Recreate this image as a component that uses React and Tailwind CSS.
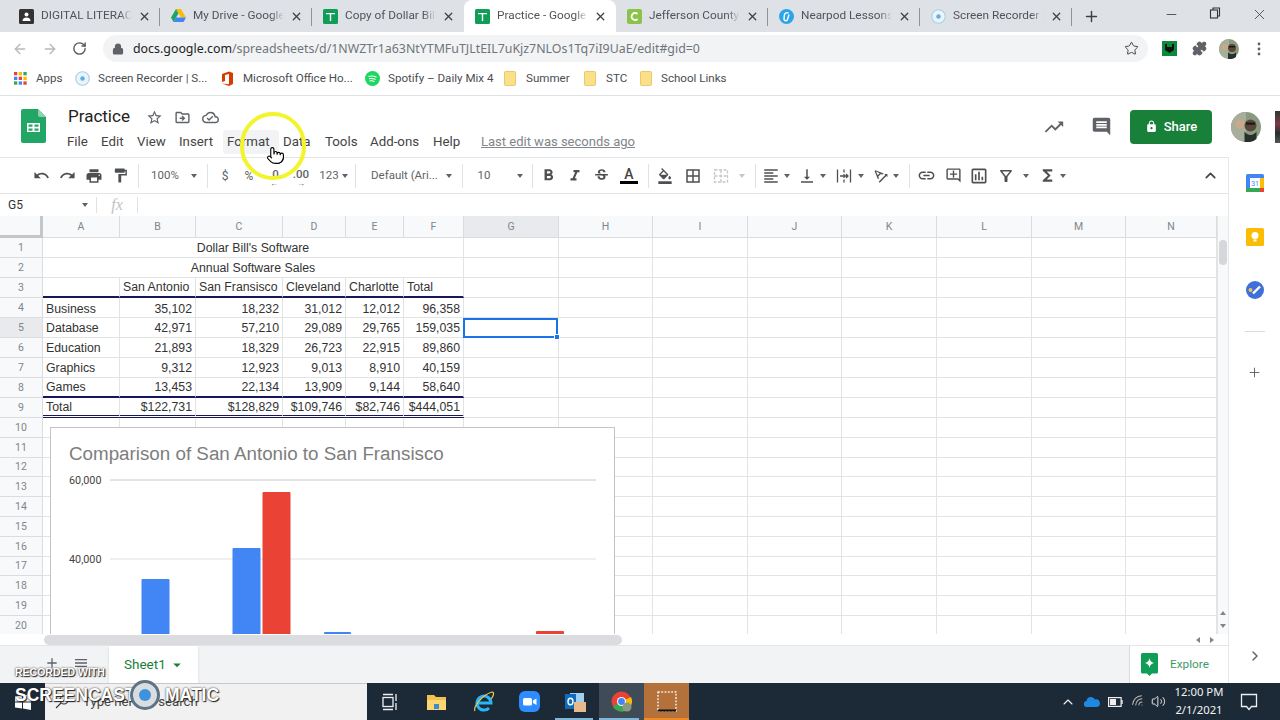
import React from "react";
import { ArrowLeft, ArrowRight, RotateCw, Lock, Star, Puzzle, Pointer, X, Plus, Minus, ChevronRight, ChevronUp, Wifi, Volume2 } from "lucide-react";
import {
  MdUndo, MdRedo, MdPrint, MdFormatPaint, MdFormatBold, MdFormatItalic, MdStrikethroughS, MdFormatColorFill, MdBorderAll,
  MdFormatAlignLeft, MdVerticalAlignBottom, MdTextRotationAngleup, MdLink, MdOutlineAddComment, MdOutlineInsertChart, MdOutlineFilterAlt,
  MdFunctions, MdStarBorder, MdOutlineDriveFileMove, MdOutlineCloudDone, MdTrendingUp, MdComment, MdLock, MdArrowDropDown, MdMenu, MdAdd,
} from "react-icons/md";

const ui = "font-['Noto_Sans',sans-serif]";
const rb = "font-['Roboto',sans-serif]";

const SheetIcon = () => (
  <svg width="15" height="15" viewBox="0 0 15 15" className="shrink-0"><rect width="15" height="15" rx="1.5" fill="#0f9d58" /><path d="M3 4h9v1.3H8.2V12H6.8V5.3H3z" fill="#fff" /></svg>
);
const RecorderIcon = ({ s = 15 }) => (
  <svg width={s} height={s} viewBox="0 0 16 16" className="shrink-0"><circle cx="8" cy="8" r="7.2" fill="#eaf4fa" stroke="#a8cfe6" strokeWidth="1.2" /><circle cx="8" cy="8" r="2.4" fill="#5fb0de" /></svg>
);
const Favicon = ({ k }) => {
  if (k === "sheet") return <SheetIcon />;
  if (k === "rec") return <RecorderIcon />;
  if (k === "classroom") return <svg width="15" height="15" viewBox="0 0 15 15" className="shrink-0"><rect width="15" height="15" rx="1.5" fill="#333" /><circle cx="7.5" cy="5.6" r="2" fill="#fff" /><path d="M3.5 12c0-2.6 1.8-3.6 4-3.6s4 1 4 3.6z" fill="#fff" /></svg>;
  if (k === "drive") return <svg width="15" height="14" viewBox="0 0 15 14" className="shrink-0"><path d="M5 0h5l5 8.6h-5z" fill="#fbbc04" /><path d="M5 0 0 8.6 2.5 13l5-8.6z" fill="#1fa463" /><path d="M2.5 13H12.5l2.5-4.4H5z" fill="#4285f4" /></svg>;
  if (k === "c") return <svg width="15" height="15" viewBox="0 0 15 15" className="shrink-0"><rect width="15" height="15" rx="2" fill="#8bc34a" /><path d="M10.5 5a3.5 3.5 0 1 0 0 5" fill="none" stroke="#fff" strokeWidth="1.8" /></svg>;
  return <svg width="15" height="15" viewBox="0 0 15 15" className="shrink-0"><circle cx="7.5" cy="7.5" r="7.5" fill="#2aa5ec" /><path d="M9.5 4a3 3 0 0 0-4 1.5L5 10a1.8 1.8 0 0 0 3.5.5L10 5.5" fill="none" stroke="#fff" strokeWidth="1.5" /></svg>;
};

const tabs = [
  ["classroom", "DIGITAL LITERACY"],
  ["drive", "My Drive - Google"],
  ["sheet", "Copy of Dollar Bill"],
  ["sheet", "Practice - Google :", true],
  ["c", "Jefferson County S"],
  ["nearpod", "Nearpod Lessons:"],
  ["rec", "Screen Recorder |"],
];

function TabBar() {
  return (
    <div className={`flex h-8 bg-[#dee1e6] pl-2 ${rb}`}>
      {tabs.map(([k, t, active], i) => (
        <div key={i} className={`flex items-center shrink-0 w-[152px] h-8 pl-[11px] relative ${active ? "bg-white rounded-t-lg" : ""}`}>
          <Favicon k={k} />
          <span className="ml-[7px] w-[91px] overflow-hidden whitespace-nowrap text-[11.8px] text-[#50545a] [mask-image:linear-gradient(to_right,black_86%,transparent)]">{t}</span>
          <X size={13} strokeWidth={2.4} className="ml-[6px] text-[#3c4043] shrink-0" />
          {!active && i !== 2 && <div className="absolute right-0 top-[8px] w-px h-[18px] bg-[#8f9297]" />}
        </div>
      ))}
      <div className="flex items-center justify-center shrink-0 w-10 ml-[-1px]"><Plus size={17} strokeWidth={2} className="text-[#3c4043]" /></div>
      <div className="flex flex-1 items-start pt-[6px] pl-[53px] gap-[28px] text-[#444]">
        <Minus size={15} strokeWidth={1.4} className="mt-[1px] shrink-0" />
        <svg width="14" height="14" viewBox="0 0 14 14" className="ml-[1px] shrink-0" fill="none" stroke="#333" strokeWidth="1.1"><rect x="2.5" y="4" width="7" height="8" /><path d="M5 4V2h6.5v8h-2" /></svg>
        <X size={17} strokeWidth={1.2} className="ml-[1px] shrink-0" />
      </div>
    </div>
  );
}

const Avatar = ({ s }) => (
  <svg width={s} height={s} viewBox="0 0 20 20" className="shrink-0">
    <circle cx="10" cy="10" r="10" fill="#8a9a80" />
    <path d="M0 10A10 10 0 0 1 10 0v20A10 10 0 0 1 0 10" fill="#a8ae9a" />
    <circle cx="6" cy="8" r="3" fill="#c9a98c" />
    <circle cx="13" cy="9" r="4" fill="#5a4638" />
    <path d="M9 13c2 3 6 3 8 0v5a10 10 0 0 1-8 2z" fill="#26312e" />
    <rect x="10" y="7" width="6" height="1.5" fill="#1b1b1b" />
  </svg>
);

function AddressBar() {
  return (
    <div className={`flex items-center h-[33px] bg-white ${ui}`}>
      <div className="flex items-center w-[103px] pl-[12px] gap-[14px]">
        <ArrowLeft size={16} className="text-[#b6b8bb]" />
        <ArrowRight size={16} className="text-[#b6b8bb]" />
        <RotateCw size={15} strokeWidth={2.2} className="text-[#55585c]" />
      </div>
      <div className="flex items-center w-[1045px] h-[27px] bg-[#f1f3f4] rounded-full pl-[9px]">
        <Lock size={12} strokeWidth={2.4} className="text-[#5f6368] fill-[#5f6368]" />
        <span className="ml-[9px] mt-[1px] text-[12.38px] text-[#70757a] whitespace-nowrap"><span className="text-[#222]">docs.google.com</span>/spreadsheets/d/1NWZTr1a63NtYTMFuTJLtEIL7uKjz7NLOs1Tq7iI9UaE/edit#gid=0</span>
        <div className="flex-1" />
        <Star size={15} strokeWidth={1.6} className="text-[#444] mr-[9px]" />
      </div>
      <div className="flex items-center pl-[14px] gap-[15px]">
        <svg width="15" height="15" viewBox="0 0 15 15"><rect width="15" height="15" fill="#0a8a3a" /><path d="M3 3h9v6l-4.5 3L3 9z" fill="#111" /><rect x="5" y="3" width="5" height="3" fill="#0a8a3a" /></svg>
        <Puzzle size={15} className="text-[#5f6368] fill-[#5f6368]" />
        <div className="ml-[-3px]"><Avatar s={20} /></div>
        <svg width="4" height="16" viewBox="0 0 4 16" className="ml-[3px]" fill="#5f6368"><circle cx="2" cy="3" r="1.4" /><circle cx="2" cy="8" r="1.4" /><circle cx="2" cy="13" r="1.4" /></svg>
      </div>
    </div>
  );
}

const Folder = () => <svg width="12" height="15" viewBox="0 0 12 15" className="shrink-0"><rect x=".5" y=".5" width="11" height="14" rx="1" fill="#fbe08a" stroke="#e9c96a" /></svg>;

function Bookmarks() {
  return (
    <div className={`flex items-center h-[31px] pb-[2px] bg-white border-b border-[#dfe1e4] text-[11.6px] text-[#4a4d51] whitespace-nowrap ${rb}`}>
      <div className="flex items-center w-[75px] pl-[14px]">
        <svg width="13" height="13" viewBox="0 0 13 13">
          {[["#ea4335", "#fbbc04", "#34a853"], ["#4285f4", "#ea4335", "#fbbc04"], ["#34a853", "#4285f4", "#ea4335"]].map((r, y) => r.map((c, x) => <rect key={x + "-" + y} x={x * 4.7} y={y * 4.7} width="3.3" height="3.3" fill={c} />))}
        </svg>
        <span className="ml-[9px]">Apps</span>
      </div>
      <div className="flex items-center w-[144px]"><RecorderIcon /><span className="ml-[8px]">Screen Recorder | S...</span></div>
      <div className="flex items-center w-[145px] ml-[1px] pl-[1px]">
        <svg width="13" height="15" viewBox="0 0 13 15"><path d="M1 3 8 .5 12 2v11l-4 2-7-2.5 7 .8V3L4 4v6L1 11z" fill="#d83b01" /></svg>
        <span className="ml-[9px]">Microsoft Office Ho...</span>
      </div>
      <div className="flex items-center w-[138px] ml-[-1px] pl-[1px]">
        <svg width="15" height="15" viewBox="0 0 15 15"><circle cx="7.5" cy="7.5" r="7.5" fill="#1ed760" /><path d="M3.5 5.500c2.500-.8 5.500-.6 8 .7M4 7.800c2.200-.6 4.500-.4 6.500.7M4.500 10c1.800-.4 3.500-.3 5 .6" fill="none" stroke="#fff" strokeWidth="1.1" /></svg>
        <span className="ml-[8px]">Spotify – Daily Mix 4</span>
      </div>
      <div className="flex items-center w-[80px] ml-[2px]"><Folder /><span className="ml-[10px]">Summer</span></div>
      <div className="flex items-center w-[56px]"><Folder /><span className="ml-[10px]">STC</span></div>
      <div className="flex items-center"><Folder /><span className="ml-[9px]">School Links</span></div>
    </div>
  );
}

function SheetHeader() {
  const menus = [["File", "w-[34px]"], ["Edit", "w-[36px]"], ["View", "w-[42px]"], ["Insert", "w-[48px]"], ["Format", "w-[56px]"], ["Data", "w-[42px]"], ["Tools", "w-[45px]"], ["Add-ons", "w-[63px]"], ["Help", "w-[53px]"]];
  return (
    <div className={`flex h-[61px] bg-white pl-[21px] ${rb}`}>
      <svg width="25" height="34" viewBox="0 0 25 34" className="mt-[13px] shrink-0">
        <path d="M2 0h15l8 8v24a2 2 0 0 1-2 2H2a2 2 0 0 1-2-2V2a2 2 0 0 1 2-2z" fill="#23a566" />
        <path d="M17 0l8 8h-6a2 2 0 0 1-2-2z" fill="#8ed1b1" />
        <path d="M6 14h13v9H6z" fill="#fff" /><path d="M7.5 15.500h4v2.200h-4zM13.500 15.500h4v2.200h-4zM7.500 19.500h4v2.200h-4zM13.500 19.500h4v2.200h-4z" fill="#23a566" />
      </svg>
      <div className="flex flex-col ml-[21px] pt-[10px]">
        <div className="flex items-center h-[22px] text-[#222]">
          <span className="text-[17px] w-[80px] pl-[1px]">Practice</span>
          <MdStarBorder size={17} className="text-[#5f6368] ml-[-1px]" />
          <MdOutlineDriveFileMove size={17} className="text-[#5f6368] ml-[11px]" />
          <MdOutlineCloudDone size={17} className="text-[#5f6368] ml-[11px]" />
        </div>
        <div className="flex items-center h-[24px] mt-[2px] text-[13.3px] text-[#444] ml-[-4px]">
          {menus.map(([m, w]) => (
            <div key={m} className={`${w} h-[24px] flex items-center pl-1 ${m === "Format" ? "bg-[#f1f3f4] rounded-sm" : ""}`}>{m}</div>
          ))}
          <span className="text-[#80868b] underline text-[13px] ml-[-1px] whitespace-nowrap">Last edit was seconds ago</span>
        </div>
      </div>
      <div className="flex-1" />
      <div className="flex items-center h-[61px]">
        <MdTrendingUp size={22} className="text-[#5f6368]" />
        <MdComment size={21} className="text-[#5f6368] ml-[26px]" />
        <div className="flex items-center justify-center ml-[18px] w-[82px] h-[34px] bg-[#188038] rounded text-white text-[13px] font-medium gap-[6px]">
          <MdLock size={13} />Share
        </div>
        <div className="ml-[19px]"><Avatar s={30} /></div>
        <div className="ml-[14px] w-[5px] h-[32px] bg-[linear-gradient(#2e3a30,#7b3a46_40%,#253030_70%,#555)]" />
      </div>
    </div>
  );
}

const Arrow = ({ c = "#5f6368" }) => <span className="block shrink-0 w-0 h-0 border-x-[3.5px] border-x-transparent border-t-[4px]" style={{ borderTopColor: c }} />;
const Sep = () => <div className="w-px h-[24px] bg-[#e0e2e4] mx-auto shrink-0" />;

function Toolbar() {
  const ic = "text-[#4d5053] shrink-0";
  const c = "flex items-center justify-center shrink-0";
  return (
    <div className={`flex items-center h-[37px] border-y border-[#e3e5e7] pl-[28px] text-[#5f6368] text-[11.5px] whitespace-nowrap ${rb}`}>
      <div className={`${c} w-[26px]`}><MdUndo size={17} className={ic} /></div>
      <div className={`${c} w-[27px]`}><MdRedo size={17} className={ic} /></div>
      <div className={`${c} w-[25px]`}><MdPrint size={18} className={ic} /></div>
      <div className={`${c} w-[28px]`}><MdFormatPaint size={17} className={ic} /></div>
      <div className={`${c} w-[8px]`}><Sep /></div>
      <div className={`${c} w-[46px]`}>100%</div>
      <div className={`${c} w-[12px]`}><Arrow /></div>
      <div className={`${c} w-[14px]`}><Sep /></div>
      <div className={`${c} w-[22px] text-[12px]`}>$</div>
      <div className={`${c} w-[26px] text-[12px]`}>%</div>
      <div className={`${c} w-[24px] flex-col leading-none font-medium pt-[5px]`}>.0<span className="text-[8px] leading-[6px]">←</span></div>
      <div className={`${c} w-[30px] flex-col leading-none font-medium pt-[5px]`}>.00<span className="text-[8px] leading-[6px]">→</span></div>
      <div className={`${c} w-[26px]`}>123</div>
      <div className={`${c} w-[6px]`}><Arrow /></div>
      <div className={`${c} w-[14px]`}><Sep /></div>
      <div className="w-[80px] pl-[9px] shrink-0">Default (Ari...</div>
      <div className={`${c} w-[14px]`}><Arrow /></div>
      <div className={`${c} w-[12px]`}><Sep /></div>
      <div className={`${c} w-[32px]`}>10</div>
      <div className="w-[14px] shrink-0" />
      <div className={`${c} w-[12px]`}><Arrow /></div>
      <div className={`${c} w-[12px]`}><Sep /></div>
      <div className={`${c} w-[22px] ml-[-1px]`}><MdFormatBold size={19} className={ic} /></div>
      <div className={`${c} w-[32px]`}><MdFormatItalic size={18} className={ic} /></div>
      <div className={`${c} w-[20px]`}><MdStrikethroughS size={17} className={ic} /></div>
      <div className={`${c} w-[36px] flex-col`}><span className="text-[14px] leading-[14px] text-[#444] font-medium">A</span><span className="block w-[18px] h-[3px] bg-black" /></div>
      <div className={`${c} w-[2px]`}><Sep /></div>
      <div className={`${c} w-[32px]`}><MdFormatColorFill size={16} className={ic} /></div>
      <div className={`${c} w-[24px]`}><MdBorderAll size={18} className={ic} /></div>
      <div className={`${c} w-[32px]`}>
        <svg width="16" height="16" viewBox="0 0 16 16" fill="none" stroke="#c4c7c5" strokeWidth="1.3" strokeDasharray="3 1.5"><rect x="1.5" y="2" width="13" height="12" /><path d="M8 2v12M1.5 8h13" /></svg>
      </div>
      <div className={`${c} w-[10px]`}><Arrow c="#c4c7c5" /></div>
      <div className={`${c} w-[16px]`}><Sep /></div>
      <div className={`${c} w-[16px]`}><MdFormatAlignLeft size={18} className={ic} /></div>
      <div className={`${c} w-[16px]`}><Arrow /></div>
      <div className={`${c} w-[24px]`}><MdVerticalAlignBottom size={18} className={ic} /></div>
      <div className={`${c} w-[8px]`}><Arrow /></div>
      <div className={`${c} w-[34px]`}>
        <svg width="16" height="16" viewBox="0 0 16 16" fill="none" stroke="#4d5053" strokeWidth="1.3"><path d="M1.5 1.500v13M14.500 1.500v13M8 1.500v3M8 6v4M8 11.500v3M4 8h8M10 6l2 2-2 2" /></svg>
      </div>
      <div className={`${c} w-[0px]`}><Arrow /></div>
      <div className={`${c} w-[30px] ml-[5px]`}><MdTextRotationAngleup size={18} className={ic} /></div>
      <div className={`${c} w-[0px]`}><Arrow /></div>
      <div className={`${c} w-[26px]`}><Sep /></div>
      <div className={`${c} w-[8px]`}><MdLink size={19} className={ic} /></div>
      <div className={`${c} w-[46px]`}><MdOutlineAddComment size={17} className={ic} /></div>
      <div className={`${c} w-[6px]`}><MdOutlineInsertChart size={20} className={ic} /></div>
      <div className={`${c} w-[48px]`}><MdOutlineFilterAlt size={18} className={ic} /></div>
      <div className={`${c} w-[0px] ml-[-4px]`}><Arrow /></div>
      <div className={`${c} w-[42px]`}><MdFunctions size={19} className={ic} /></div>
      <div className={`${c} w-[0px] ml-[-5px]`}><Arrow /></div>
      <div className="flex-1" />
      <ChevronUp size={17} strokeWidth={2.4} className="text-[#444] mr-[9px]" />
    </div>
  );
}

function FormulaBar() {
  return (
    <div className={`flex items-center h-[22px] text-[12px] text-[#444] ${rb}`}>
      <span className="w-[82px] pl-[8px] text-[#333]">G5</span>
      <Arrow />
      <div className="w-px h-[16px] bg-[#dfe1e4] ml-[8px]" />
      <span className="w-[40px] text-center font-['Liberation_Serif',serif] italic text-[16px] text-[#c0c2c5]">fx</span>
      <div className="w-px h-[16px] bg-[#dfe1e4]" />
    </div>
  );
}

const colGrid = "grid grid-cols-[43px_77px_76px_87px_63px_58px_60px_95px_94px_95px_94px_95px_95px_94px_91px]";
const cellBase = "border-r border-b border-[#e2e3e3]";

const data = [
  ["Business", "35,102", "18,232", "31,012", "12,012", "96,358"],
  ["Database", "42,971", "57,210", "29,089", "29,765", "159,035"],
  ["Education", "21,893", "18,329", "26,723", "22,915", "89,860"],
  ["Graphics", "9,312", "12,923", "9,013", "8,910", "40,159"],
  ["Games", "13,453", "22,134", "13,909", "9,144", "58,640"],
  ["Total", "$122,731", "$128,829", "$109,746", "$82,746", "$444,051"],
];

const RowHead = ({ n, h }) => (
  <div className={`${h} flex items-center justify-center pt-[1px] border-r border-b border-[#dadce0] text-[10.5px] text-[#80868b] ${rb} ${n === 5 ? "bg-[#e8eaed]" : "bg-[#f8f9fa]"}`}>{n}</div>
);
const Empty = ({ count }) => Array.from({ length: count }).map((_, i) => <div key={i} className={cellBase} />);

function Chart() {
  return (
    <div className="absolute left-[50px] top-[211px] w-[565px] h-[210px] bg-white border border-[#c4c4c4] overflow-hidden">
      <div className="pl-[18px] pt-[14px] text-[18.8px] leading-[24px] text-[#7d7d7d] font-['Liberation_Sans',sans-serif] whitespace-nowrap">Comparison of San Antonio to San Fransisco</div>
      <svg width="565" height="170" viewBox="0 0 565 170" className="block absolute left-0 top-[38px]">
        <line x1="59" x2="545" y1="14" y2="14" stroke="#c8c8c8" />
        <line x1="59" x2="545" y1="93" y2="93" stroke="#e0e0e0" />
        <text x="18" y="18" fontSize="10.8" fontFamily="Roboto, sans-serif" fill="#444">60,000</text>
        <text x="18" y="97" fontSize="10.8" fontFamily="Roboto, sans-serif" fill="#444">40,000</text>
        <rect x="90.5" y="113" width="28" height="60" rx="1" fill="#4285f4" />
        <rect x="181.5" y="82" width="28" height="90" rx="1" fill="#4285f4" />
        <rect x="211.5" y="26" width="28" height="150" rx="1" fill="#ea4335" />
        <rect x="273" y="166" width="27" height="10" rx="1" fill="#4285f4" />
        <rect x="485" y="165" width="28" height="10" rx="1" fill="#ea4335" />
      </svg>
    </div>
  );
}

function Grid() {
  const headers = ["A", "B", "C", "D", "E", "F", "G", "H", "I", "J", "K", "L", "M", "N"];
  const h = "h-[20px]";
  return (
    <div className="relative flex-1 overflow-hidden">
      <div className={`${colGrid} h-[22px] ${rb}`}>
        <div className="bg-[#f8f9fa] border-r-[3px] border-b-[3px] border-[#c4c7c9]" />
        {headers.map((c) => (
          <div key={c} className={`flex items-center justify-center text-[10.5px] text-[#80868b] border-r border-b border-[#dadce0] ${c === "G" ? "bg-[#e8eaed]" : "bg-[#f8f9fa]"}`}>{c}</div>
        ))}
      </div>
      <div className={`${colGrid} auto-rows-max text-[12.3px] leading-[14px] text-[#333] font-['Liberation_Sans',sans-serif]`}>
        <RowHead n={1} h={h} />
        <div className={`col-span-6 flex items-center justify-center pt-[1px] ${cellBase}`}>Dollar Bill's Software</div>
        <Empty count={8} />
        <RowHead n={2} h={h} />
        <div className={`col-span-6 flex items-center justify-center pt-[1px] ${cellBase}`}>Annual Software Sales</div>
        <Empty count={8} />
        <RowHead n={3} h={h} />
        <div className={`${cellBase} border-b-2 border-b-[#17175e]`} />
        {["San Antonio", "San Fransisco", "Cleveland", "Charlotte", "Total"].map((t) => (
          <div key={t} className={`flex items-center pl-[3px] ${cellBase} border-b-2 border-b-[#17175e] whitespace-nowrap overflow-hidden`}>{t}</div>
        ))}
        <Empty count={8} />
        {data.map((row, r) => (
          <React.Fragment key={r}>
            <RowHead n={r + 4} h={h} />
            {row.map((v, c) => (
              <div key={c} className={`flex items-center ${cellBase} whitespace-nowrap ${r === 0 ? "pt-[3px]" : r < 4 ? "pt-[1px]" : ""} ${c === 0 ? "pl-[3px]" : "justify-end pr-[3px]"} ${r === 4 ? "border-b-2 border-b-[#17175e]" : r === 5 ? "border-b-[3px] border-double border-b-[#17175e]" : ""}`}>{v}</div>
            ))}
            {r === 1 ? (
              <>
                <div className="border-2 border-[#1a73e8] relative ml-[-1px] mr-[1px]">
                  <div className="absolute right-[-4px] bottom-[-4px] w-[6px] h-[6px] bg-[#1a73e8] border border-white" />
                </div>
                <Empty count={7} />
              </>
            ) : (
              <Empty count={8} />
            )}
          </React.Fragment>
        ))}
        {[10, 11, 12, 13, 14, 15, 16, 17, 18, 19, 20].map((n) => (
          <React.Fragment key={n}>
            <RowHead n={n} h="h-[19.8px]" />
            <Empty count={14} />
          </React.Fragment>
        ))}
      </div>
      <Chart />
    </div>
  );
}

function SidePanel() {
  return (
    <div className="flex flex-col items-center w-[52px] border-l border-[#e5e7e9] bg-white">
      <svg width="18" height="18" viewBox="0 0 18 18" className="mt-[17px]">
        <rect width="18" height="18" rx="1.5" fill="#4285f4" />
        <rect x="13" y="4" width="5" height="10" fill="#fbbc04" />
        <rect y="14" width="14" height="4" fill="#34a853" />
        <rect x="14" y="14" width="4" height="4" fill="#ea4335" />
        <rect x="4" y="4" width="10" height="10" fill="#fff" />
        <text x="5.2" y="12" fontSize="7" fill="#4285f4" fontFamily="Roboto, sans-serif">31</text>
      </svg>
      <svg width="18" height="18" viewBox="0 0 18 18" className="mt-[36px]">
        <rect width="18" height="18" rx="1.5" fill="#fbbc04" />
        <circle cx="9" cy="7.5" r="3.5" fill="#fff" />
        <rect x="7.5" y="11.5" width="3" height="2" fill="#fff" />
      </svg>
      <svg width="18" height="18" viewBox="0 0 18 18" className="mt-[35px]">
        <circle cx="9" cy="9" r="9" fill="#3f6fd8" />
        <circle cx="4.5" cy="9" r="2" fill="#f1c15c" />
        <path d="M7 12.5 14 5.500" stroke="#fff" strokeWidth="2.4" />
      </svg>
      <div className="w-[20px] h-px bg-[#dadce0] mt-[32px]" />
      <Plus size={15} strokeWidth={1.5} className="text-[#5f6368] mt-[33px]" />
      <div className="flex-1" />
      <ChevronRight size={16} strokeWidth={2.2} className="text-[#5f6368] mb-[19px]" />
    </div>
  );
}

function Taskbar() {
  return (
    <div className={`relative flex items-stretch h-[37px] bg-[#1c2a38] ${ui}`}>
      <div className="flex items-center justify-center w-[45px]">
        <svg width="16" height="16" viewBox="0 0 16 16" fill="#fff"><path d="M0 2.5 7 1.5V7.500H0zM8 1.400 16 0V7.500H8zM0 8.500H7V14.500L0 13.500zM8 8.500H16V16L8 14.600z" /></svg>
      </div>
      <div className={`flex items-center w-[322px] bg-[#f1f1f1] text-[#444] pl-[10px] border-t border-[#c8c8c8] ${rb}`}>
        <svg width="14" height="14" viewBox="0 0 14 14" fill="none" stroke="#333" strokeWidth="1.1"><circle cx="9" cy="5" r="4" /><path d="M6 8 1 13" /></svg>
        <span className="ml-[14px] text-[13.2px]">Type here to search</span>
      </div>
      <div className="flex items-center justify-center w-[45px]">
        <svg width="16" height="18" viewBox="0 0 16 18" fill="none" stroke="#eee" strokeWidth="1.3"><rect x="1" y="4.5" width="10" height="9" /><path d="M1 1.500h10M1 16.500h10M14 1v7M14 10v7" /></svg>
      </div>
      <div className="flex items-center justify-center w-[49px]">
        <svg width="21" height="20" viewBox="0 0 21 20"><path d="M1 3h7l2 2h10v13H1z" fill="#f4c04e" /><rect x="1" y="8" width="19" height="10" fill="#fbd671" /><rect x="8" y="12" width="5" height="5" fill="#3d8ccb" /></svg>
      </div>
      <div className="flex items-center justify-center w-[45px]">
        <svg width="22" height="22" viewBox="0 0 22 22" fill="none">
          <path d="M5 12h13a7 7 0 1 0-2 5" stroke="#29b6f6" strokeWidth="3" />
          <path d="M2 20C0 16 9 4 19 1c3 0 1 5-1 7" stroke="#f2c94c" strokeWidth="1.2" />
        </svg>
      </div>
      <div className="flex items-center justify-center w-[47px]">
        <svg width="21" height="21" viewBox="0 0 21 21"><rect width="21" height="21" rx="6" fill="#2d8cff" /><rect x="4" y="7" width="9" height="7.5" rx="1.5" fill="#fff" /><path d="m14 9.500 3.500-2v6.500l-3.500-2z" fill="#fff" /></svg>
      </div>
      <div className="relative flex items-center justify-center w-[46px]">
        <svg width="22" height="22" viewBox="0 0 22 22"><rect x="5" y="2" width="14" height="12" fill="#9fd0f2" /><rect y="3" width="11" height="15" fill="#0f6cbd" /><ellipse cx="5.5" cy="10.5" rx="2.5" ry="3.3" fill="none" stroke="#fff" strokeWidth="1.4" /><rect x="9" y="11" width="12" height="10" fill="#e8b98a" /></svg>
        <div className="absolute bottom-0 left-[2px] right-[6px] h-[2px] bg-[#7fb6d9]" />
      </div>
      <div className="relative flex items-center justify-center w-[45px] bg-[#3f4b56]">
        <svg width="21" height="21" viewBox="0 0 21 21"><circle cx="10.5" cy="10.5" r="10" fill="#ea4335" /><path d="M10.5 10.500 1.800 15.500A10 10 0 0 0 13 20.200z" fill="#34a853" /><path d="M10.500 10.500 13 20.200A10 10 0 0 0 20 6z" fill="#fbbc04" /><circle cx="10.5" cy="10.5" r="4.5" fill="#fff" /><circle cx="10.5" cy="10.5" r="3.4" fill="#4285f4" /><circle cx="16" cy="16" r="4.5" fill="#8a9a80" /></svg>
        <div className="absolute bottom-0 left-0 right-[5px] h-[2px] bg-[#7fb6d9]" />
      </div>
      <div className="relative flex items-center justify-center w-[45px] bg-[#b4713a]">
        <svg width="20" height="22" viewBox="0 0 20 22" fill="none"><rect x="1" y="1" width="18" height="19" stroke="#eee" strokeWidth="1.5" strokeDasharray="1.8 1.5" /><rect x="1" y="18.500" width="18" height="2" fill="#111" /></svg>
        <div className="absolute bottom-0 left-0 right-0 h-[2px] bg-[#f08a24]" />
      </div>
      <div className="flex-1" />
      <div className="flex items-center text-[#f2f2f2]">
        <ChevronUp size={16} strokeWidth={1.6} />
        <svg width="16" height="11" viewBox="0 0 16 11" className="ml-[8px]" fill="#1f88e0"><path d="M3 11a3 3 0 0 1-.5-6A4.500 4.500 0 0 1 11 3.500 3.800 3.800 0 0 1 13 11z" /></svg>
        <svg width="15" height="10" viewBox="0 0 15 10" className="ml-[8px]" fill="none" stroke="#eee" strokeWidth="1.2"><rect x=".6" y=".6" width="12.500" height="8.800" /><rect x="2" y="2" width="6" height="6" fill="#eee" stroke="none" /><rect x="13.400" y="3" width="1.300" height="4" fill="#eee" stroke="none" /></svg>
        <Wifi size={15} strokeWidth={1.6} className="ml-[8px] rotate-[-45deg] text-[#bbb]" />
        <Volume2 size={15} strokeWidth={1.5} className="ml-[5px]" />
        <div className="flex flex-col items-center w-[56px] ml-[5px] text-[11.3px] leading-[20px] pb-[1px]">
          <span>12:00 PM</span>
          <span className="mt-[-2px]">2/1/2021</span>
        </div>
        <div className="flex items-center justify-center w-[44px] mr-[9px]">
          <svg width="18" height="18" viewBox="0 0 18 18" fill="none" stroke="#eee" strokeWidth="1.3"><path d="M1.500 1.500h15v12h-5l-2.500 3-2.500-3h-5z" /></svg>
        </div>
      </div>
    </div>
  );
}

function SheetTabs() {
  return (
    <div className={`flex h-[38px] bg-[#f1f3f4] border-t border-[#e3e5e7] ${rb}`}>
      <div className="flex items-start w-[109px] pl-[44px] pt-[9px] gap-[13px] text-[#5f6368]">
        <MdAdd size={16} /><MdMenu size={16} />
      </div>
      <div className="flex items-center w-[89px] h-[37px] bg-white pl-[15px] text-[#188038] text-[13.5px] shadow-sm">
        Sheet1<MdArrowDropDown size={18} className="ml-[2px]" />
      </div>
      <div className="flex-1" />
      <div className="flex items-center w-[99px] bg-white border-l border-[#dadce0] pl-[11px]">
        <svg width="17" height="23" viewBox="0 0 17 23"><path d="M1.500 0h14A1.500 1.500 0 0 1 17 1.500V19a1.500 1.500 0 0 1-1.500 1.500H11L8.500 23 6 20.500H1.500A1.500 1.500 0 0 1 0 19V1.500A1.500 1.500 0 0 1 1.500 0z" fill="#0f9d58" /><path d="M8.500 5c.5 3 1.500 4 4.500 5-3 1-4 2-4.500 5-.5-3-1.500-4-4.500-5 3-1 4-2 4.500-5z" fill="#fff" /></svg>
        <span className="ml-[12px] text-[#3c9a68] text-[11.8px]">Explore</span>
      </div>
    </div>
  );
}

export default function App() {
  return (
    <div className="relative flex flex-col w-[1280px] h-[720px] overflow-hidden bg-white">
      <TabBar />
      <AddressBar />
      <Bookmarks />
      <SheetHeader />
      <div className="flex h-[526px]">
        <div className="flex flex-col w-[1228px]">
          <Toolbar />
          <FormulaBar />
          <div className="flex h-[418px]">
            <Grid />
            <div className="w-[11px] bg-[#f8f9fa] border-l border-[#e2e3e3] pt-[24px] flex flex-col items-center">
              <div className="w-[8px] h-[25px] rounded bg-[#d5d7da]" />
              <div className="flex-1" />
              <div className="flex flex-col items-center gap-[9px] mb-[6px]"><span className="block w-0 h-0 border-x-[3px] border-x-transparent border-b-[4px] border-b-[#80868b]" /><Arrow c="#80868b" /></div>
            </div>
          </div>
          <div className="flex items-center h-[11px] pl-[44px]">
            <div className="w-[578px] h-[10px] rounded-full bg-[#dadce0]" />
            <div className="flex-1" />
            <div className="flex items-center gap-[10px] mr-[14px]">
              <span className="block w-0 h-0 border-y-[3px] border-y-transparent border-r-[4px] border-r-[#80868b]" />
              <span className="block w-0 h-0 border-y-[3px] border-y-transparent border-l-[4px] border-l-[#80868b]" />
            </div>
          </div>
          <SheetTabs />
        </div>
        <SidePanel />
      </div>
      <Taskbar />

      <div className="absolute left-[240px] top-[112px] w-[66px] h-[68px] rounded-full border-[4px] border-[#f2f42d] pointer-events-none" />
      <Pointer size={19} className="absolute left-[266px] top-[146px] text-black fill-white" strokeWidth={1.4} />

      <div className="absolute left-[15px] top-[665px] text-white font-['Liberation_Sans',sans-serif] font-bold whitespace-nowrap [text-shadow:0_0_2px_#222,1px_1px_1px_#222] pointer-events-none">
        <div className="text-[10.5px] leading-[14px]">RECORDED WITH</div>
        <div className="flex items-center mt-[1px]">
          <span className="text-[17.5px] leading-[24px] w-[112px]">SCREENCAST</span>
          <span className="block w-[30px] h-[30px] rounded-full border-[3px] border-[#5e7385] bg-[#d9dde0] relative shrink-0 ml-[3px]"><span className="absolute inset-[6px] rounded-full bg-[#3f93dd]" /></span>
          <span className="text-[17.5px] leading-[24px] ml-[5px]">MATIC</span>
        </div>
      </div>
    </div>
  );
}
